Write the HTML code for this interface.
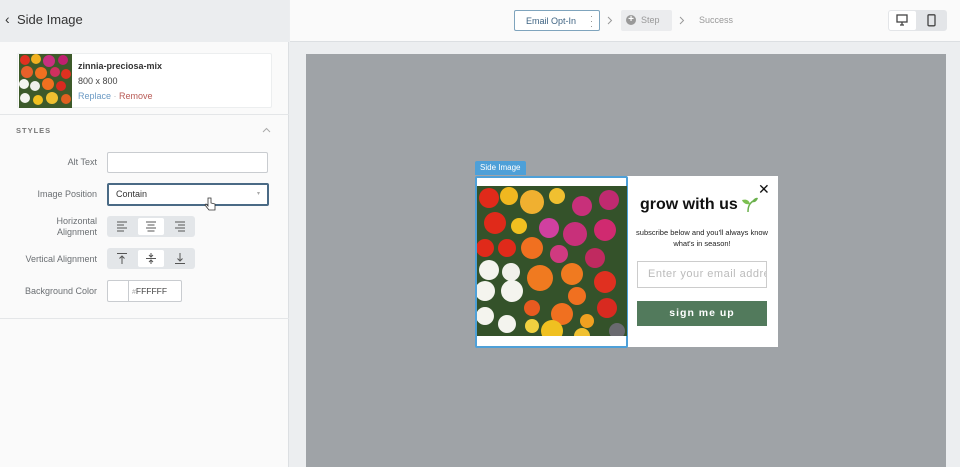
<!DOCTYPE html>
<html><head><style>
*{box-sizing:border-box;margin:0;padding:0}
body{width:960px;height:467px;overflow:hidden;font-family:"Liberation Sans",sans-serif;background:#eceef0;position:relative}
.abs{position:absolute}
.lbl{position:absolute;font-size:9px;color:#6b6f73;text-align:right;width:97px;left:0;line-height:11px}
.seg{position:absolute;left:107px;width:88px;height:21px;background:#e3e6e9;border-radius:3px}
.seg div{position:absolute;top:2px;width:26px;height:17px}
.seg .on{background:#fff;border-radius:2px}
</style></head><body>
<div class="abs" style="left:0;top:0;width:289px;height:467px;background:#fafafa;border-right:1px solid #dcdfe2"></div>
<div class="abs" style="left:0;top:0;width:289px;height:42px;background:#ebedef"></div>
<div class="abs" style="left:5px;top:11px;font-size:14px;color:#333">&#8249;</div>
<div class="abs" style="left:17px;top:12px;font-size:13px;color:#333">Side Image</div>
<div class="abs" style="left:17px;top:53px;width:255px;height:55px;background:#fff;border:1px solid #eceeef;border-radius:2px"></div>
<svg class="abs" style="left:19px;top:54px" width="53" height="54" viewBox="0 0 53 54">
<rect width="53" height="54" fill="#3d5a2a"/>
<g>
<circle cx="6" cy="6" r="5" fill="#e03020"/><circle cx="17" cy="5" r="5" fill="#f0b020"/><circle cx="30" cy="7" r="6" fill="#c83080"/><circle cx="44" cy="6" r="5" fill="#c02070"/>
<circle cx="8" cy="18" r="6" fill="#e8602a"/><circle cx="22" cy="19" r="6" fill="#f07020"/><circle cx="36" cy="18" r="5" fill="#d03060"/><circle cx="47" cy="20" r="5" fill="#e03020"/>
<circle cx="5" cy="30" r="5" fill="#f5f5f0"/><circle cx="16" cy="32" r="5" fill="#f0f0ea"/><circle cx="29" cy="30" r="6" fill="#f07020"/><circle cx="42" cy="32" r="5" fill="#d82a20"/>
<circle cx="6" cy="44" r="5" fill="#f5f5f0"/><circle cx="19" cy="46" r="5" fill="#f0c020"/><circle cx="33" cy="44" r="6" fill="#f0c030"/><circle cx="47" cy="45" r="5" fill="#e06020"/>
</g></svg>
<div class="abs" style="left:78px;top:61px;font-size:9px;font-weight:bold;color:#333">zinnia-preciosa-mix</div>
<div class="abs" style="left:78px;top:76px;font-size:9px;color:#444">800 x 800</div>
<div class="abs" style="left:78px;top:91px;font-size:9px;color:#6b9ac4">Replace <span style="color:#bbb">·</span> <span style="color:#b85a55">Remove</span></div>
<div class="abs" style="left:0;top:114px;width:289px;height:1px;background:#e4e6e8"></div>
<div class="abs" style="left:16px;top:126px;font-size:7.5px;letter-spacing:1px;font-weight:bold;color:#777">STYLES</div>
<svg class="abs" style="left:262px;top:127px" width="9" height="6"><path d="M1 5l3.5-3.5L8 5" fill="none" stroke="#aaa" stroke-width="1"/></svg>

<div class="lbl" style="top:157px">Alt Text</div>
<div class="abs" style="left:107px;top:152px;width:161px;height:21px;background:#fff;border:1px solid #c9ccd0;border-radius:2px"></div>
<div class="lbl" style="top:189px">Image Position</div>
<div class="abs" style="left:107px;top:183px;width:162px;height:23px;background:#fff;border:2px solid #4a6a85;border-radius:2px;font-size:9px;color:#333;padding:4px 7px">Contain<span style="position:absolute;right:7px;top:5px;color:#aaa;font-size:6px">&#9662;</span></div>
<div class="lbl" style="top:216px">Horizontal<br>Alignment</div>
<div class="seg" style="top:216px"><div class="on" style="left:31px"></div></div>
<svg class="abs" style="left:115px;top:220px" width="75" height="12"><g stroke="#555" stroke-width="1"><path d="M2 2h10M2 5h7M2 8h10M2 11h7"/><path d="M31 2h10M32.5 5h7M31 8h10M32.5 11h7"/><path d="M60 2h10M63 5h7M60 8h10M63 11h7"/></g></svg>
<div class="lbl" style="top:254px">Vertical Alignment</div>
<div class="seg" style="top:248px"><div class="on" style="left:31px"></div></div>
<svg class="abs" style="left:115px;top:252px" width="75" height="13"><g stroke="#555" stroke-width="1" fill="none"><path d="M2 1.5h10M7 4v8M4.5 6.5L7 4l2.5 2.5"/><path d="M31 6.5h10M36 1v4M34 3l2 2 2-2M36 12V8M34 10l2-2 2 2"/><path d="M60 11.5h10M65 1v8M62.5 6.5L65 9l2.5-2.5"/></g></svg>
<div class="lbl" style="top:286px">Background Color</div>
<div class="abs" style="left:107px;top:280px;width:75px;height:22px;background:#fff;border:1px solid #c9ccd0;border-radius:2px"></div>
<div class="abs" style="left:128px;top:280px;width:1px;height:22px;background:#c9ccd0"></div>
<div class="abs" style="left:132px;top:286px;font-size:8.5px;color:#444"><span style="color:#aaa;font-size:7px">#</span>FFFFFF</div>
<div class="abs" style="left:0;top:318px;width:289px;height:1px;background:#e4e6e8"></div>

<div class="abs" style="left:290px;top:0;width:670px;height:42px;background:#fafafa;border-bottom:1px solid #dcdfe2"></div>
<div class="abs" style="left:514px;top:10px;width:86px;height:21px;border:1px solid #7fa4bd;border-radius:2px;background:#fff;font-size:9px;color:#3f6483;padding:5px 11px">Email Opt-In<span style="position:absolute;right:6px;top:3px;color:#888;font-size:9px;line-height:5px">·<br>·<br>·</span></div>
<svg class="abs" style="left:607px;top:16px" width="6" height="9"><path d="M1 1l3.5 3.5L1 8" fill="none" stroke="#999"/></svg>
<div class="abs" style="left:621px;top:10px;width:51px;height:21px;background:#ebecee;border-radius:2px"></div>
<div class="abs" style="left:626px;top:15px;width:10px;height:10px;border-radius:50%;background:#999;color:#fff;font-size:10px;line-height:10px;text-align:center;font-weight:bold">+</div>
<div class="abs" style="left:641px;top:15px;font-size:9px;color:#999">Step</div>
<svg class="abs" style="left:679px;top:16px" width="6" height="9"><path d="M1 1l3.5 3.5L1 8" fill="none" stroke="#999"/></svg>
<div class="abs" style="left:699px;top:15px;font-size:9px;color:#999">Success</div>
<div class="abs" style="left:888px;top:10px;width:59px;height:21px;background:#e3e5e8;border-radius:3px"></div>
<div class="abs" style="left:889px;top:11px;width:27px;height:19px;background:#fff;border-radius:2px"></div>
<svg class="abs" style="left:896px;top:14px" width="45" height="13"><g fill="none" stroke="#444" stroke-width="1.3"><rect x="1" y="1" width="10" height="7"/><path d="M6 8v3M4 11h4"/><rect x="32" y="0.8" width="7" height="11" rx="1"/></g></svg>

<div class="abs" style="left:306px;top:54px;width:640px;height:413px;background:#9fa3a7"></div>
<div class="abs" style="left:475px;top:161px;width:51px;height:14px;background:#4ea0d8;border-radius:2px 2px 0 0;font-size:8px;color:#fff;padding:2px 5px">Side Image</div>
<div class="abs" style="left:627px;top:176px;width:151px;height:171px;background:#fff"></div>
<div class="abs" style="left:475px;top:176px;width:153px;height:172px;background:#fff;border:2px solid #4ea0d8;border-radius:2px"></div>
<svg class="abs" style="left:477px;top:186px" width="150" height="150" viewBox="0 0 150 150">
<rect width="150" height="150" fill="#34522a"/>
<g>
<circle cx="12" cy="12" r="10" fill="#e02a1a"/><circle cx="32" cy="10" r="9" fill="#f0b820"/><circle cx="55" cy="16" r="12" fill="#f0b030"/><circle cx="80" cy="10" r="8" fill="#f0c030"/><circle cx="105" cy="20" r="10" fill="#c8307a"/><circle cx="132" cy="14" r="10" fill="#c02a70"/>
<circle cx="18" cy="37" r="11" fill="#e02a1a"/><circle cx="42" cy="40" r="8" fill="#f0c020"/><circle cx="72" cy="42" r="10" fill="#d040a0"/><circle cx="98" cy="48" r="12" fill="#c8307a"/><circle cx="128" cy="44" r="11" fill="#d02a70"/>
<circle cx="8" cy="62" r="9" fill="#e02a1a"/><circle cx="30" cy="62" r="9" fill="#e02a1a"/><circle cx="55" cy="62" r="11" fill="#f07020"/><circle cx="82" cy="68" r="9" fill="#d03a80"/><circle cx="118" cy="72" r="10" fill="#c02a60"/>
<circle cx="12" cy="84" r="10" fill="#f4f4ee"/><circle cx="34" cy="86" r="9" fill="#f0f0ea"/><circle cx="63" cy="92" r="13" fill="#f07a20"/><circle cx="95" cy="88" r="11" fill="#f07a20"/><circle cx="128" cy="96" r="11" fill="#e03020"/>
<circle cx="8" cy="105" r="10" fill="#f4f4ee"/><circle cx="35" cy="105" r="11" fill="#f4f4ee"/><circle cx="100" cy="110" r="9" fill="#f07020"/><circle cx="130" cy="122" r="10" fill="#d82a20"/>
<circle cx="55" cy="122" r="8" fill="#e85a20"/><circle cx="85" cy="128" r="11" fill="#f07020"/><circle cx="110" cy="135" r="7" fill="#f0a020"/>
<circle cx="8" cy="130" r="9" fill="#f4f4ee"/><circle cx="30" cy="138" r="9" fill="#f4f4ee"/><circle cx="55" cy="140" r="7" fill="#f0d040"/><circle cx="75" cy="145" r="11" fill="#f0c020"/><circle cx="105" cy="150" r="8" fill="#f0c030"/><circle cx="140" cy="145" r="8" fill="#6a6a70"/>
</g></svg>
<div class="abs" style="left:758px;top:181px;font-size:14px;color:#111">&#10005;</div>
<div class="abs" style="left:640px;top:196px;font-size:16px;font-weight:bold;color:#111">grow with us</div>
<svg class="abs" style="left:741px;top:196px" width="18" height="17"><path d="M7 16c0-5 1-8 5-11" fill="none" stroke="#6ab04c" stroke-width="1.5"/><path d="M9 8C5 9 2 7 1 4c4-1 7 0 8 4z" fill="#7cc050"/><path d="M11 6c1-3 4-5 6-4-1 3-3 5-6 4z" fill="#6ab04c"/></svg>
<div class="abs" style="left:636px;top:227px;width:132px;text-align:center;font-size:7.5px;line-height:11px;color:#222">subscribe below and you'll always know what's in season!</div>
<div class="abs" style="left:637px;top:261px;width:130px;height:27px;border:1px solid #ccc;background:#fff;font-size:11px;color:#bbb;padding:6px 10px;white-space:nowrap;overflow:hidden;letter-spacing:.5px">Enter your email address</div>
<div class="abs" style="left:637px;top:301px;width:130px;height:25px;background:#527a5c;color:#fff;font-size:10.5px;font-weight:bold;text-align:center;line-height:25px;letter-spacing:1px">sign me up</div>
<svg class="abs" style="left:204px;top:197px" width="12" height="14"><path d="M4 1v8l-2-2-1 1 4 5h6V7l-4-1V1z" fill="#fff" stroke="#333" stroke-width=".8"/></svg>
</body></html>
